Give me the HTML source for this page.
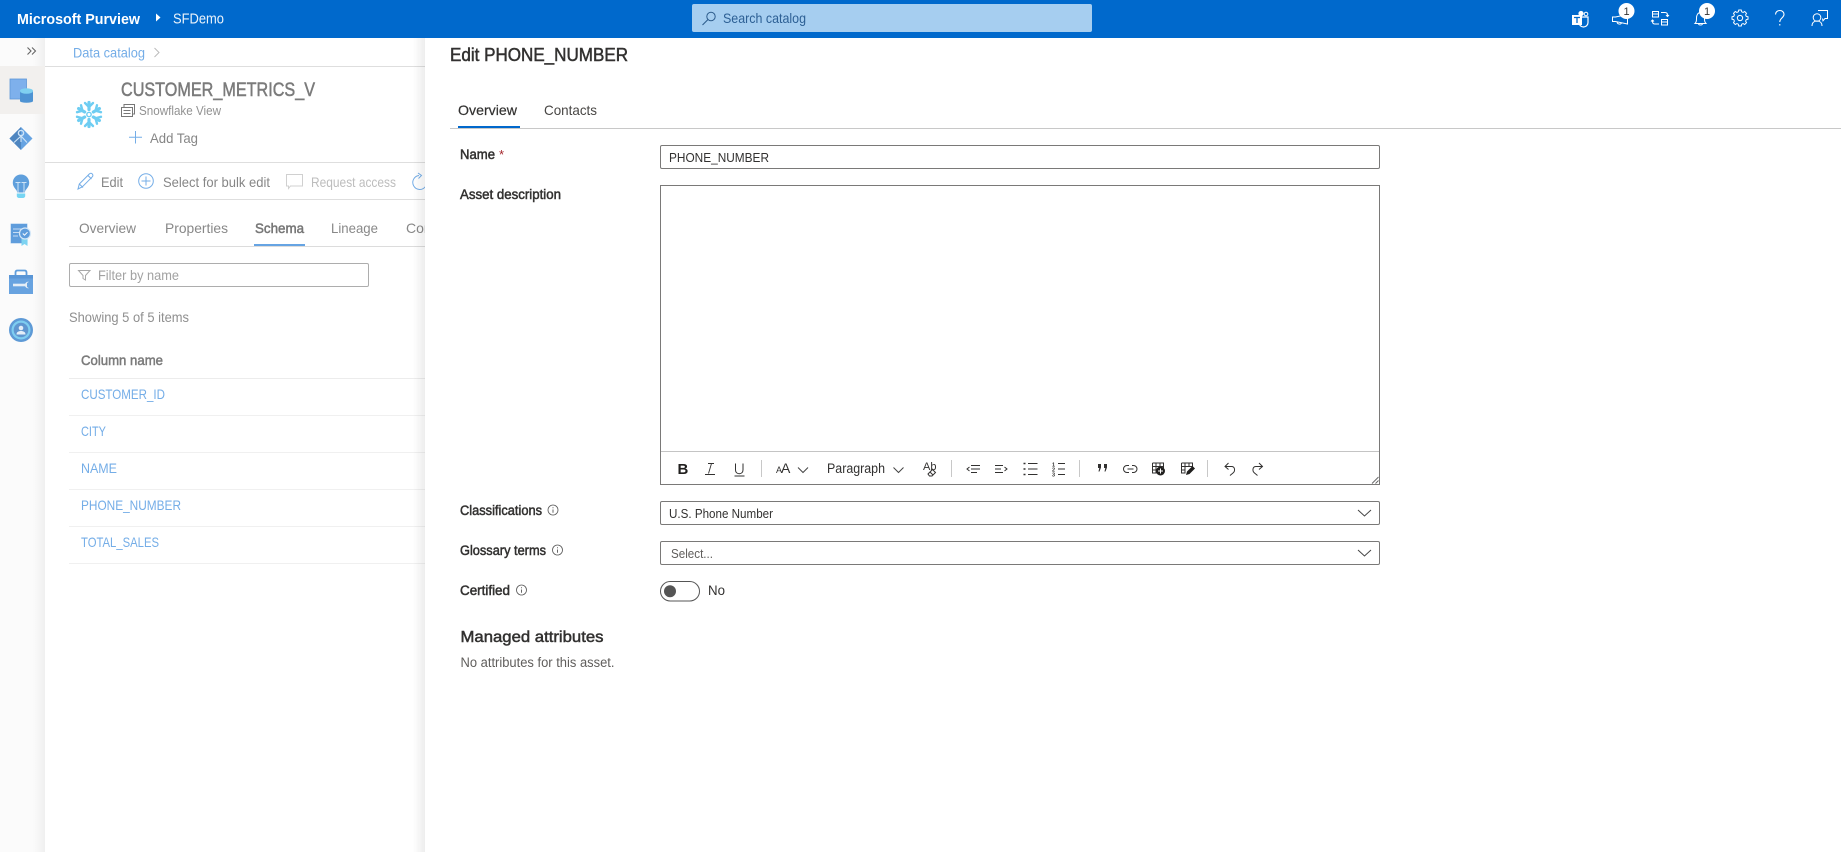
<!DOCTYPE html>
<html lang="en"><head><meta charset="utf-8"><title>Edit PHONE_NUMBER</title>
<style>
html,body{margin:0;padding:0;background:#fff;width:1841px;height:852px;overflow:hidden}
svg{display:block;position:absolute;left:0;top:0;filter:blur(.25px)}
text{font-family:"Liberation Sans",sans-serif;font-size:14px;white-space:pre}
.sb{stroke-width:.5px}
</style></head><body>
<svg width="1841" height="852" viewBox="0 0 1841 852" xmlns="http://www.w3.org/2000/svg">
<defs>
<linearGradient id="rs" x1="0" x2="1" y1="0" y2="0"><stop offset="0" stop-color="#000" stop-opacity="0"/><stop offset="1" stop-color="#000" stop-opacity=".07"/></linearGradient>
<linearGradient id="ls" x1="0" x2="1" y1="0" y2="0"><stop offset="0" stop-color="#000" stop-opacity="0"/><stop offset="1" stop-color="#000" stop-opacity=".045"/></linearGradient>
<g id="arm"><path d="M0-5V-12" stroke="#6ecdf2" stroke-width="3.200" stroke-linecap="round" fill="none"/><path d="M-4-11.500L-1-8.500M4-11.500L1-8.500" stroke="#6ecdf2" stroke-width="2.400" stroke-linecap="round" fill="none"/></g>
</defs>

<!-- left rail -->
<rect x="0" y="38" width="45" height="814" fill="#fbfbfb"/>
<rect x="33" y="38" width="12" height="814" fill="url(#ls)"/>
<rect x="0" y="66" width="45" height="48" fill="#f2f0ee"/>
<path d="M27.500 47.500l3.500 3.500-3.500 3.500M32 47.500l3.500 3.500-3.500 3.500" stroke="#666" stroke-width="1.100" fill="none"/>

<!-- rail icon 1 data -->
<rect x="10" y="79" width="16.500" height="20" fill="#7eb0ec" stroke="#5e97d8" stroke-width=".8"/>
<rect x="20" y="91" width="13" height="10" fill="#4e93d3"/>
<ellipse cx="26.500" cy="91" rx="6.500" ry="2.800" fill="#7fd0f0"/>
<ellipse cx="26.500" cy="101" rx="6.500" ry="1.800" fill="#4e93d3"/>
<!-- rail icon 2 diamond -->
<path d="M21 127L32.500 138.500L21 150L9.500 138.500Z" fill="#66a3e2"/>
<path d="M21 127L9.500 138.500L21 150Z" fill="#4f86c0"/>
<circle cx="21" cy="133" r="2.600" fill="none" stroke="#cfe4f7" stroke-width="1.400"/>
<path d="M21 135.500V142M21 136L14 142.500M21 136L27 142.500" stroke="#cfe4f7" stroke-width="1.100" fill="none"/>
<!-- rail icon 3 bulb -->
<path d="M21 174.500c-4.700 0-8.200 3.700-8.200 8.200 0 3.200 1.800 5.200 3.400 7.200.7 1 .8 1.600.8 2.600h8c0-1 .1-1.600.8-2.600 1.600-2 3.400-4 3.400-7.200 0-4.500-3.500-8.200-8.200-8.200z" fill="#5f9fdc"/>
<path d="M16.800 193.500h8.400v2.500c0 1.200-1.200 2-2.400 2h-3.600c-1.200 0-2.400-.8-2.400-2z" fill="#76d5f3"/>
<path d="M18 182.500v10M24 182.500v10M15.500 182.500h5M21.500 182.500h5" stroke="#cfe4f6" stroke-width="1" fill="none"/>
<!-- rail icon 4 certificate -->
<rect x="10.500" y="223.500" width="17" height="20" fill="#5f9ddc" stroke="#e8f1fa" stroke-width=".6"/>
<path d="M13 229h9M13 232.500h6M13 236h5" stroke="#c6dcf3" stroke-width="1.100"/>
<path d="M21.500 238.500V246l3-2 3 2v-7.500z" fill="#7ed3f1"/>
<circle cx="25" cy="233.500" r="5.500" fill="#5f9ddc" stroke="#d5e8f8" stroke-width="1.200"/>
<path d="M22.800 233.500l1.700 1.700 3-3" stroke="#fff" stroke-width="1" fill="none"/>
<!-- rail icon 5 toolbox -->
<path d="M15.500 276v-3.500c0-1.200.7-2 2-2h7c1.300 0 2 .8 2 2v3.500" stroke="#5f9ddc" stroke-width="1.800" fill="none"/>
<rect x="9" y="275" width="24" height="19" fill="#68a3e0"/>
<rect x="9" y="275" width="24" height="3.500" fill="#5a96d6"/>
<path d="M13 285h12.500" stroke="#e4edf6" stroke-width="2.600"/>
<path d="M29 281.800a3.300 3.300 0 1 0 0 6.400l-2-1.200v-4z" fill="#e4edf6"/>
<!-- rail icon 6 circle -->
<circle cx="21" cy="330" r="12" fill="#5e9ad6"/>
<circle cx="21" cy="330" r="9.500" fill="#7ecdf0"/>
<circle cx="21" cy="330" r="7.300" fill="#5f96d0"/>
<circle cx="21" cy="328" r="2.300" fill="#e4eef8"/>
<path d="M16.500 334.500c0-2.500 2-3.500 4.500-3.500s4.500 1 4.500 3.500z" fill="#e4eef8"/>

<!-- main -->
<rect x="45" y="66" width="380" height="1" fill="#dedede"/>
<rect x="45" y="162" width="380" height="1" fill="#dedede"/>
<rect x="45" y="199" width="380" height="1" fill="#dedede"/>
<text x="73" y="57.500" textLength="72" lengthAdjust="spacingAndGlyphs" fill="#74ade7">Data catalog</text>
<path d="M154.500 48l4.500 4.500-4.500 4.500" stroke="#bbb" stroke-width="1" fill="none"/>

<text x="121" y="96" style="font-size:19px" textLength="194" lengthAdjust="spacingAndGlyphs" fill="#7b7b7b" stroke="#7b7b7b" class="sb">CUSTOMER_METRICS_V</text>
<circle cx="89" cy="114.500" r="2.200" fill="none" stroke="#6ecdf2" stroke-width="1.400"/>
<g transform="translate(89 114.500)"><use href="#arm"/><use href="#arm" transform="rotate(60)"/><use href="#arm" transform="rotate(120)"/><use href="#arm" transform="rotate(180)"/><use href="#arm" transform="rotate(240)"/><use href="#arm" transform="rotate(300)"/></g>

<rect x="121.500" y="107.500" width="11" height="9" fill="none" stroke="#777" stroke-width="1"/>
<path d="M124 107v-2.500h10.500v9.500H133M123.500 110.500h7M123.500 113.500h7" fill="none" stroke="#777" stroke-width="1"/>
<text x="139" y="115" style="font-size:12.500px" textLength="82" lengthAdjust="spacingAndGlyphs" fill="#929292">Snowflake View</text>
<path d="M135.500 131v12.500M129 137.200h13" stroke="#74ade7" stroke-width="1"/>
<text x="150" y="143" textLength="48" lengthAdjust="spacingAndGlyphs" fill="#868686">Add Tag</text>

<path d="M78 189l1.300-5 10-10c1-1 2.300-1 3 0 .8.800.8 2 0 2.800l-10 10zM79.300 184l3.700 3.500M88 175.500l3.500 3.500" stroke="#74ade7" stroke-width="1" fill="none"/>
<text x="101" y="187" textLength="22" lengthAdjust="spacingAndGlyphs" fill="#868686">Edit</text>
<circle cx="146" cy="181" r="7.300" fill="none" stroke="#74ade7" stroke-width="1"/>
<path d="M146 176.500v9M141.500 181h9" stroke="#74ade7" stroke-width="1"/>
<text x="163" y="187" textLength="107" lengthAdjust="spacingAndGlyphs" fill="#868686">Select for bulk edit</text>
<path d="M286.500 174.500h16v11.500h-12l-2 2.500v-2.500h-2z" fill="none" stroke="#d0d0d0" stroke-width="1"/>
<text x="311" y="187" textLength="85" lengthAdjust="spacingAndGlyphs" fill="#bdbdbd">Request access</text>
<path d="M419 175.500a7 7 0 1 0 6.500 11M418 173l3.500 2.500-3 3" stroke="#74ade7" stroke-width="1" fill="none"/>

<text x="79" y="233" textLength="57" lengthAdjust="spacingAndGlyphs" fill="#888">Overview</text>
<text x="165" y="233" textLength="63" lengthAdjust="spacingAndGlyphs" fill="#888">Properties</text>
<text x="255" y="233" textLength="49" lengthAdjust="spacingAndGlyphs" fill="#777" stroke="#777" class="sb">Schema</text>
<text x="331" y="233" textLength="47" lengthAdjust="spacingAndGlyphs" fill="#888">Lineage</text>
<text x="406" y="233" fill="#888">Con</text>
<rect x="69" y="246" width="356" height="1" fill="#dcdcdc"/>
<rect x="254" y="244" width="51" height="2" fill="#66a4e3"/>

<rect x="69.500" y="263.500" width="299" height="23" rx="1.500" fill="#fff" stroke="#adadad"/>
<path d="M78.500 270.500h11.500l-4.500 5v4.500l-2.500-1.500v-3z" fill="none" stroke="#a8a8a8" stroke-width="1"/>
<text x="98" y="280" textLength="81" lengthAdjust="spacingAndGlyphs" fill="#a2a2a2">Filter by name</text>
<text x="69" y="322" textLength="120" lengthAdjust="spacingAndGlyphs" fill="#8f8f8f">Showing 5 of 5 items</text>
<text x="81" y="365" textLength="82" lengthAdjust="spacingAndGlyphs" fill="#7b7b7b" stroke="#7b7b7b" class="sb">Column name</text>

<rect x="69" y="378" width="356" height="1" fill="#ececec"/>
<rect x="69" y="415" width="356" height="1" fill="#f0f0f0"/>
<rect x="69" y="452" width="356" height="1" fill="#f0f0f0"/>
<rect x="69" y="489" width="356" height="1" fill="#f0f0f0"/>
<rect x="69" y="526" width="356" height="1" fill="#f0f0f0"/>
<rect x="69" y="563" width="356" height="1" fill="#f0f0f0"/>
<text x="81" y="399" textLength="84" lengthAdjust="spacingAndGlyphs" fill="#74ade7">CUSTOMER_ID</text>
<text x="81" y="436" textLength="25" lengthAdjust="spacingAndGlyphs" fill="#74ade7">CITY</text>
<text x="81" y="473" textLength="36" lengthAdjust="spacingAndGlyphs" fill="#74ade7">NAME</text>
<text x="81" y="510" textLength="100" lengthAdjust="spacingAndGlyphs" fill="#74ade7">PHONE_NUMBER</text>
<text x="81" y="547" textLength="78" lengthAdjust="spacingAndGlyphs" fill="#74ade7">TOTAL_SALES</text>

<!-- panel -->
<rect x="413" y="38" width="12" height="814" fill="url(#rs)"/>
<rect x="425" y="38" width="1416" height="814" fill="#fff"/>
<text x="450" y="61" style="font-size:18px" textLength="178" lengthAdjust="spacingAndGlyphs" fill="#323130" stroke="#323130" class="sb">Edit PHONE_NUMBER</text>
<text x="458" y="115" textLength="59" lengthAdjust="spacingAndGlyphs" fill="#323130" stroke="#323130" stroke-width=".2">Overview</text>
<text x="544" y="115" textLength="53" lengthAdjust="spacingAndGlyphs" fill="#484644">Contacts</text>
<rect x="450" y="128" width="1391" height="1" fill="#c8c8c8"/>
<rect x="458" y="126" width="62" height="2" fill="#0068cc"/>

<text x="460" y="159" style="font-size:13.500px" textLength="35" lengthAdjust="spacingAndGlyphs" fill="#323130" stroke="#323130" class="sb">Name</text>
<text x="499" y="159" fill="#a4262c" style="font-size:13px">*</text>
<text x="460" y="199" style="font-size:13.500px" textLength="101" lengthAdjust="spacingAndGlyphs" fill="#323130" stroke="#323130" class="sb">Asset description</text>
<rect x="660.500" y="145.500" width="719" height="23" rx="1.500" fill="#fff" stroke="#7a7978"/>
<text x="669" y="162" style="font-size:13px" textLength="100" lengthAdjust="spacingAndGlyphs" fill="#323130">PHONE_NUMBER</text>
<rect x="660.500" y="185.500" width="719" height="299" fill="#fff" stroke="#7a7978"/>
<rect x="661" y="451" width="718" height="1" fill="#c4c4c4"/>

<!-- toolbar -->
<text x="677.500" y="474" style="font-size:15px;font-weight:bold" fill="#201f1e">B</text>
<path d="M708 463.500h6M711.500 463.500l-3 10M705 474.500h10" stroke="#323130" stroke-width=".9" fill="none"/>
<path d="M735.500 463.500v6.500c0 5 7.500 5 7.500 0v-6.500M734.500 476h10" stroke="#323130" stroke-width="1" fill="none"/>
<rect x="761" y="460" width="1" height="17" fill="#c8c8c8"/>
<text x="776" y="473" style="font-size:9px" fill="#323130">A</text>
<text x="781" y="473" style="font-size:14px" fill="#323130">A</text>
<path d="M798 467.500l5 5 5-5" stroke="#444" stroke-width="1" fill="none"/>
<text x="827" y="473" style="font-size:13.500px" textLength="58" lengthAdjust="spacingAndGlyphs" fill="#323130">Paragraph</text>
<path d="M893.500 467.500l5 5 5-5" stroke="#444" stroke-width="1" fill="none"/>
<text x="923" y="470" style="font-size:11px" fill="#323130">Ab</text>
<path d="M928 474l4.500-4.500 3 3-3.500 3.500h-2.500zM930 472l3 3" stroke="#323130" stroke-width="1" fill="none"/>
<rect x="951" y="460" width="1" height="17" fill="#c8c8c8"/>
<path d="M971 465.500h9M971 469h9M971 472.500h6M969.500 467l-2.500 2 2.500 2" stroke="#323130" stroke-width="1" fill="none"/>
<path d="M995 465.500h8M995 469h6M995 472.500h8M1004.500 467l2.500 2-2.500 2" stroke="#323130" stroke-width="1" fill="none"/>
<path d="M1028 463.500h9.500M1028 469h9.500M1028 474.500h9.500" stroke="#323130" stroke-width="1"/>
<path d="M1023.500 463.500h2M1023.500 469h2M1023.500 474.500h2" stroke="#323130" stroke-width="1.500"/>
<path d="M1058 463.500h7M1058 469h7M1058 474.500h7" stroke="#323130" stroke-width="1"/>
<text x="1052" y="466.500" style="font-size:5.500px;font-weight:bold" fill="#323130">1</text>
<text x="1052" y="471.500" style="font-size:5.500px;font-weight:bold" fill="#323130">2</text>
<text x="1052" y="476.500" style="font-size:5.500px;font-weight:bold" fill="#323130">3</text>
<rect x="1079" y="460" width="1" height="17" fill="#c8c8c8"/>
<path d="M1098 464h3v3.500l-1.500 4h-1l.8-3.500h-1.300zM1104 464h3v3.500l-1.500 4h-1l.8-3.500h-1.300z" fill="#323130"/>
<path d="M1129 465.500h-2a3.500 3.500 0 0 0 0 7h2M1132 465.500h1.500a3.500 3.500 0 0 1 0 7h-1.500M1127.500 469h6" stroke="#323130" stroke-width="1" fill="none"/>
<path d="M1152.500 463h11v5M1152.500 463v10h5M1152.500 466.500h11M1152.500 470h5M1156 463v10M1160 463v5" stroke="#323130" stroke-width="1" fill="none"/>
<circle cx="1160.500" cy="471" r="4.500" fill="#201f1e"/>
<path d="M1160.500 468.500v5M1158 471h5" stroke="#fff" stroke-width="1"/>
<path d="M1181.500 463h11v4M1181.500 463v10h4M1181.500 466.500h11M1181.500 470h4M1185 463v10M1189 463v4" stroke="#323130" stroke-width="1" fill="none"/>
<path d="M1186 475l1-3.500 5.500-5.500 2.500 2.500-5.500 5.500z" fill="#201f1e"/>
<rect x="1207" y="460" width="1" height="17" fill="#c8c8c8"/>
<path d="M1228.500 463l-3.500 3.500 3.500 3M1225.500 466.500h6c3.500 0 4 4.500 1.500 6.500l-3 2.500" stroke="#323130" stroke-width="1" fill="none"/>
<path d="M1259 463l3.500 3.500-3.500 3M1262 466.500h-6c-3.500 0-4 4.500-1.500 6.500l3 2.500" stroke="#323130" stroke-width="1" fill="none"/>
<path d="M1372 483.500l6.500-6.500M1375.500 483.500l3-3" stroke="#666" stroke-width=".9"/>

<!-- fields -->
<text x="460" y="515" style="font-size:13.500px" textLength="82" lengthAdjust="spacingAndGlyphs" fill="#323130" stroke="#323130" class="sb">Classifications</text>
<circle cx="553" cy="510" r="5" fill="none" stroke="#555" stroke-width=".8"/><path d="M553 509.500v3.300M553 507.300v1" stroke="#555" stroke-width=".9"/>
<text x="460" y="555" style="font-size:13.500px" textLength="86" lengthAdjust="spacingAndGlyphs" fill="#323130" stroke="#323130" class="sb">Glossary terms</text>
<circle cx="557.500" cy="550" r="5" fill="none" stroke="#555" stroke-width=".8"/><path d="M557.500 549.500v3.300M557.500 547.300v1" stroke="#555" stroke-width=".9"/>
<text x="460" y="595" style="font-size:13.500px" textLength="50" lengthAdjust="spacingAndGlyphs" fill="#323130" stroke="#323130" class="sb">Certified</text>
<circle cx="521.500" cy="590" r="5" fill="none" stroke="#555" stroke-width=".8"/><path d="M521.500 589.500v3.300M521.500 587.300v1" stroke="#555" stroke-width=".9"/>

<rect x="660.500" y="501.500" width="719" height="23" rx="1.500" fill="#fff" stroke="#7a7978"/>
<text x="669" y="518" style="font-size:12.500px" textLength="104" lengthAdjust="spacingAndGlyphs" fill="#323130">U.S. Phone Number</text>
<path d="M1358 510l6.500 6 6.500-6" stroke="#444" stroke-width="1" fill="none"/>
<rect x="660.500" y="541.500" width="719" height="23" rx="1.500" fill="#fff" stroke="#7a7978"/>
<text x="671" y="558" style="font-size:12.500px" textLength="42" lengthAdjust="spacingAndGlyphs" fill="#605e5c">Select...</text>
<path d="M1358 550l6.500 6 6.500-6" stroke="#444" stroke-width="1" fill="none"/>

<rect x="660.500" y="581.500" width="39" height="19.500" rx="9.750" fill="#fff" stroke="#555"/>
<circle cx="670" cy="591.300" r="6" fill="#555"/>
<text x="708" y="595" textLength="17" lengthAdjust="spacingAndGlyphs" fill="#323130">No</text>

<text x="460.500" y="642" style="font-size:16px" textLength="143" lengthAdjust="spacingAndGlyphs" fill="#323130" stroke="#323130" class="sb">Managed attributes</text>
<text x="460.500" y="667" style="font-size:13.500px" textLength="154" lengthAdjust="spacingAndGlyphs" fill="#605e5c">No attributes for this asset.</text>

<!-- top bar -->
<rect x="0" y="0" width="1841" height="38" fill="#0069cc"/>
<text x="17" y="24" style="font-size:15px;font-weight:bold" textLength="123" lengthAdjust="spacingAndGlyphs" fill="#fff">Microsoft Purview</text>
<path d="M156 13.500l4.500 4-4.500 4z" fill="#fff"/>
<text x="173" y="23.500" style="font-size:14.500px" textLength="51" lengthAdjust="spacingAndGlyphs" fill="#eaf3fb">SFDemo</text>
<rect x="692" y="4" width="400" height="28" rx="2" fill="#a6cef0"/>
<circle cx="711" cy="16.500" r="4.200" fill="none" stroke="#2d5c8c" stroke-width="1"/>
<path d="M708 19.500l-5.500 5.500" stroke="#2d5c8c" stroke-width="1.100"/>
<text x="723" y="23" textLength="83" lengthAdjust="spacingAndGlyphs" fill="#2c5f94">Search catalog</text>

<!-- teams -->
<circle cx="1581" cy="13.500" r="2.600" fill="#fff"/><circle cx="1586" cy="14" r="1.800" fill="none" stroke="#fff"/>
<path d="M1579 17h9v5.500a4.500 4.500 0 0 1-9 0z" fill="none" stroke="#fff" stroke-width="1.200"/>
<rect x="1572" y="15" width="10" height="10" fill="#fff"/>
<path d="M1574 17.500h6M1577 17.500v5.500" stroke="#0069cc" stroke-width="1.300"/>
<!-- megaphone -->
<path d="M1612.500 17h3l12-2.500v9.500l-12-2.500h-3zM1617 21.500c0 3 4.500 3.500 4.500 1" fill="none" stroke="#fff" stroke-width="1"/>
<circle cx="1626.500" cy="11" r="8" fill="#fff"/>
<text x="1626.500" y="15" text-anchor="middle" style="font-size:11px" fill="#333">1</text>
<!-- directory switch -->
<path d="M1652.500 11.500h6v5.500h-6zM1652.500 14h6M1661.500 19.500h6v5.500h-6zM1661.500 22h6M1661 12.500h4c1.500 0 2.500 1 2.500 2.500v1.500M1666 15l1.500 1.500 1.500-1.500M1659 24h-4c-1.500 0-2.500-1-2.500-2.500V20M1654 21.500l-1.500-1.500-1.500 1.500" fill="none" stroke="#fff" stroke-width="1"/>
<!-- bell -->
<path d="M1695 23.500h11c-1.500-1.500-1.500-3-1.500-5.500 0-3-1.500-5.500-4-5.500s-4 2.500-4 5.500c0 2.500 0 4-1.500 5.500zM1698.500 23.500c0 2 4 2 4 0" fill="none" stroke="#fff" stroke-width="1"/>
<circle cx="1707" cy="11" r="8" fill="#fff"/>
<text x="1707" y="15" text-anchor="middle" style="font-size:11px" fill="#333">1</text>
<!-- gear -->
<g transform="translate(1740 18) scale(.89) translate(-1740 -19.500)">
<circle cx="1740" cy="19.500" r="3" fill="none" stroke="#fff" stroke-width="1.100"/>
<path d="M1738.600 10.500h2.800l.5 2 1.600.7 1.800-1 2 2-1 1.800.7 1.600 2 .5v2.800l-2 .5-.7 1.600 1 1.800-2 2-1.800-1-1.600.7-.5 2h-2.800l-.5-2-1.600-.7-1.800 1-2-2 1-1.800-.7-1.600-2-.5v-2.800l2-.5.7-1.600-1-1.800 2-2 1.800 1 1.600-.7z" fill="none" stroke="#fff" stroke-width="1.100"/>
</g>
<!-- help -->
<path d="M1775.500 14.500c0-2.500 2-4 4.300-4s4.200 1.500 4.200 3.800c0 3.500-4.200 3.700-4.200 7.700M1779.800 24v1.500" fill="none" stroke="#fff" stroke-width="1.100"/>
<!-- feedback -->
<path d="M1818 10.500h9.500v8h-2.500l-2 2.300-.5-2.300" fill="none" stroke="#fff" stroke-width="1"/>
<circle cx="1817" cy="17.500" r="3.800" fill="#0069cc" stroke="#fff" stroke-width="1"/>
<path d="M1812 26c0-3.500 2.200-5 5-5s5 1.500 5 5" fill="none" stroke="#fff" stroke-width="1"/>
</svg>
</body></html>
